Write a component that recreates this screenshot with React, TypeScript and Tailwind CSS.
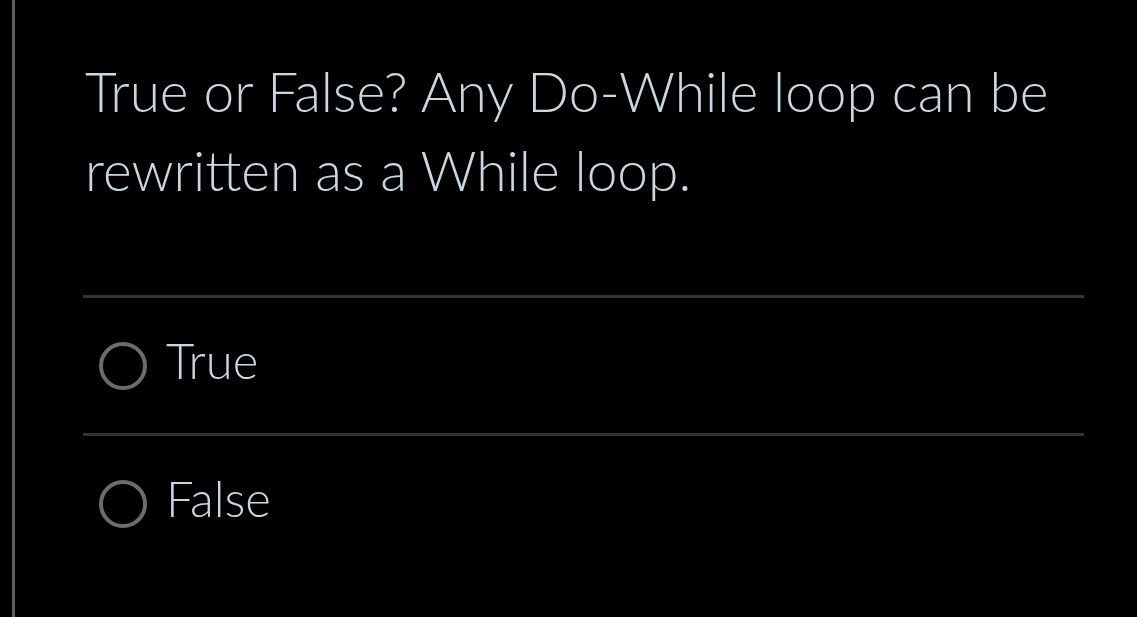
import React from "react";

function Option({ label }: { label: string }) {
  return (
    <div className="flex items-center h-[135px] pl-[16px]">
      <div className="w-[48px] h-[48px] rounded-full border-[4px] border-[#6e6b6d] shrink-0" />
      <span className="ml-[19px] mb-[10px] text-[49px] font-light text-[#c9d7e0] leading-none">{label}</span>
    </div>
  );
}

export default function App() {
  return (
    <div className="w-[1137px] h-[617px] bg-black overflow-hidden flex" style={{ fontFamily: "Lato, 'Open Sans', sans-serif" }}>
      <div className="w-[12px] shrink-0" />
      <div className="w-[3px] shrink-0 bg-[#5c5c5c]" />
      <div className="flex-1 pl-[68px] pr-[53px]">
        <div className="pt-[52px] text-[55px] leading-[79px] font-light text-[#c9d7e0] pl-[2px]">
          True or False? Any Do-While loop can be rewritten as a While loop.
        </div>
        <div className="mt-[85px] h-[3px] bg-[#333333]" />
        <Option label="True" />
        <div className="h-[3px] bg-[#333333]" />
        <Option label="False" />
      </div>
    </div>
  );
}
